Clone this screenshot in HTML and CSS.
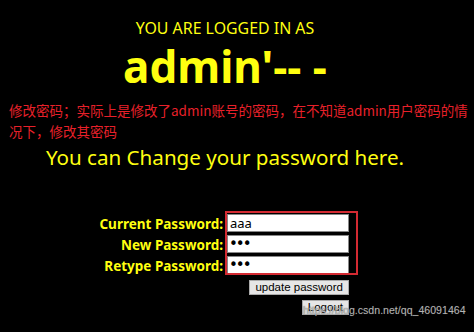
FILE: index.html
```html
<!DOCTYPE html>
<html>
<head>
<meta charset="utf-8">
<link rel="stylesheet" href="styles.css">
</head>
<body>
<div class="page">
  <div class="center">
    <div class="logged">YOU ARE LOGGED IN AS</div>
    <div class="user">admin'-- -</div>
  </div>
  <p class="note">修改密码；实际上是修改了admin账号的密码，在不知道admin用户密码的情况下，修改其密码</p>
  <div class="center">
    <div class="change">You can Change your password here.</div>
  </div>
  <div class="formwrap">
    <div class="form">
      <div class="labels">
        <div class="label">Current Password:</div>
        <div class="label">New Password:</div>
        <div class="label">Retype Password:</div>
      </div>
      <div class="inputs">
        <input class="field" type="text" value="aaa">
        <input class="field pw" type="password" value="aaa">
        <input class="field pw" type="password" value="aaa">
      </div>
    </div>
    <div class="btnrow first"><button class="btn">update password</button></div>
    <div class="btnrow"><button class="btn">Logout</button></div>
  </div>
  <div class="watermark">https://blog.csdn.net/qq_46091464</div>
</div>
</body>
</html>
```
FILE: styles.css
```css
html, body {
  margin: 0;
  padding: 0;
  background: #000;
}
body {
  width: 474px;
  height: 332px;
  overflow: hidden;
  font-family: "Noto Sans", "Noto Sans CJK SC", sans-serif;
}
.page {
  position: relative;
  height: 332px;
}
.center {
  width: 450px;
  text-align: center;
}
.logged {
  color: #ffff10;
  font-size: 15.9px;
  line-height: 20px;
  padding-top: 18px;
}
.user {
  color: #ffff10;
  font-size: 44px;
  font-weight: bold;
  line-height: 42px;
  margin-top: 7px;
}
.note {
  margin: 13px 0 0 9px;
  color: #e8202a;
  font-size: 13.5px;
  line-height: 21px;
  font-family: "Noto Sans CJK SC", sans-serif;
}
.change {
  color: #ffff10;
  font-size: 20.6px;
  line-height: 26px;
  margin-top: 2px;
}
.formwrap {
  width: 349px;
  margin-top: 44px;
}
.form {
  display: flex;
  justify-content: flex-end;
  align-items: flex-start;
  position: relative;
}
.form::after {
  content: "";
  position: absolute;
  left: 225px;
  top: -3px;
  width: 129px;
  height: 60px;
  border: 2px solid #d42a32;
  pointer-events: none;
}
.labels {
  display: flex;
  flex-direction: column;
  align-items: flex-end;
  padding-right: 4px;
}
.label {
  color: #ffff10;
  font-weight: bold;
  font-size: 13.5px;
  line-height: 21px;
  height: 21px;
}
.inputs {
  display: flex;
  flex-direction: column;
  gap: 3px;
}
.field {
  box-sizing: border-box;
  width: 122px;
  height: 18px;
  margin: 0;
  padding: 0 2px;
  border: 1px solid #888;
  background: #fff;
  font-family: "Noto Sans", sans-serif;
  font-size: 13px;
  color: #000;
  outline: none;
}
.pw {
  font-family: "DejaVu Sans", sans-serif;
  font-size: 15px;
  letter-spacing: -2px;
  padding-left: 1px;
}
.btnrow {
  display: flex;
  justify-content: flex-end;
  margin-top: 5px;
}
.btnrow.first {
  margin-top: 3px;
}
.btn {
  box-sizing: border-box;
  height: 15px;
  margin: 0;
  padding: 0 5px;
  border: 1px solid #aaa;
  background: #e6e6e6;
  color: #000;
  font-family: "Liberation Sans", sans-serif;
  font-size: 11.5px;
  line-height: 13px;
}
.watermark {
  position: absolute;
  left: 303px;
  top: 304px;
  white-space: nowrap;
  color: rgba(205, 205, 205, 0.85);
  text-shadow: 0 0 1px rgba(60, 60, 60, 0.9);
  font-family: "Liberation Sans", sans-serif;
  font-size: 10.6px;
}
```
